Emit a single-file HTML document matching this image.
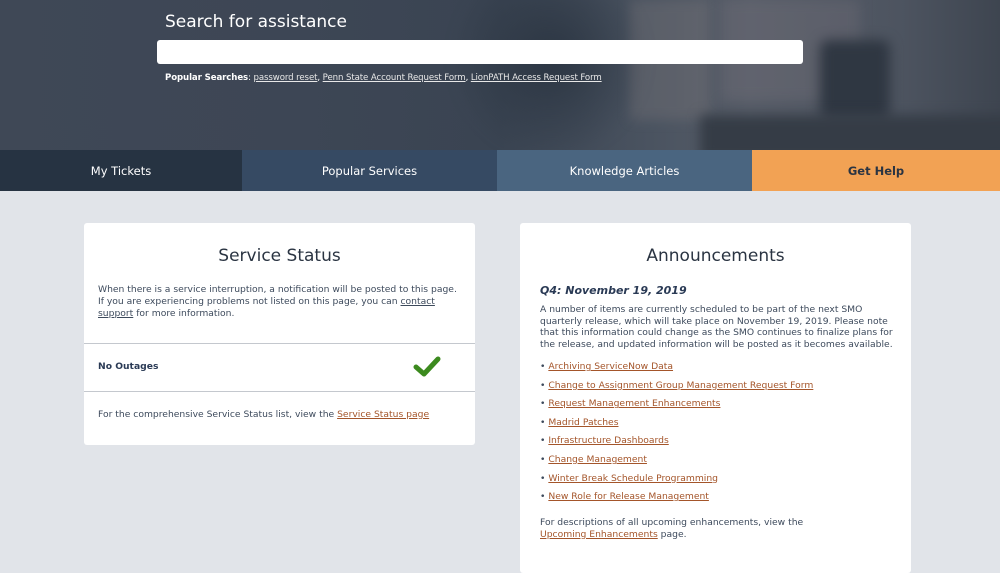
<!DOCTYPE html>
<html><head><meta charset="utf-8"><style>
*{margin:0;padding:0;box-sizing:border-box}
body{width:1000px;height:563px;overflow:hidden;background:#e1e4e9;font-family:"DejaVu Sans",sans-serif;color:#3d4a5c;position:relative}
.hero{position:absolute;left:0;top:0;width:1000px;height:150px;overflow:hidden;
background:linear-gradient(90deg,#3f4856 0%,#3d4655 30%,#3a4452 50%,#4a5360 65%,#575d68 75%,#4d5460 90%,#3e4550 100%)}
.hero .b{position:absolute;filter:blur(6px)}
h1{position:absolute;left:165px;top:12px;font-size:17px;font-weight:normal;color:#fff}
.search{position:absolute;left:157px;top:40px;width:646px;height:24px;background:#fff;border-radius:3px}
.pop{position:absolute;left:165px;top:73px;font-size:8.6px;color:#fff;letter-spacing:-0.1px}
.pop u{color:#e8e8e8}
.nav{position:absolute;top:150px;left:0;width:1000px;height:41px;display:flex;font-size:11.5px;color:#fff}
.nav div{display:flex;align-items:center;justify-content:center}
.card{position:absolute;background:#fff;border-radius:3px}
.t{font-size:17px;text-align:center;color:#2a3442}
.p{font-size:9.2px;line-height:12px}
a{color:#a4552a;text-decoration:underline}
.ann li{list-style:none;font-size:9.2px;height:18.6px}
</style></head><body>
<div class="hero">
<div class="b" style="left:450px;top:-10px;width:200px;height:170px;background:radial-gradient(ellipse at 50% 40%,#2c3643 0%,rgba(44,54,67,0) 70%)"></div>
<div class="b" style="left:630px;top:0;width:80px;height:120px;background:rgba(140,130,130,.25)"></div>
<div class="b" style="left:720px;top:0;width:140px;height:100px;background:rgba(130,125,130,.22)"></div>
<div class="b" style="left:820px;top:40px;width:70px;height:80px;background:#2f3742;border-radius:8px"></div>
<div class="b" style="left:700px;top:115px;width:320px;height:45px;background:#353c46"></div>
</div>
<h1>Search for assistance</h1>
<div class="search"></div>
<div class="pop"><b>Popular Searches</b>: <u>password reset</u>, <u>Penn State Account Request Form</u>, <u>LionPATH Access Request Form</u></div>
<div class="nav">
<div style="width:242px;background:#263342">My Tickets</div>
<div style="width:255px;background:#364a63">Popular Services</div>
<div style="width:255px;background:#4a6580">Knowledge Articles</div>
<div style="width:248px;background:#f2a254;color:#2a3442;font-weight:bold">Get Help</div>
</div>
<div class="card" style="left:84px;top:223px;width:391px;height:222px">
<div class="t" style="margin-top:23px">Service Status</div>
<div class="p" style="position:absolute;left:14px;top:61px;width:362px">When there is a service interruption, a notification will be posted to this page. If you are experiencing problems not listed on this page, you can <u>contact support</u> for more information.</div>
<div style="position:absolute;left:0;top:120px;width:391px;height:1px;background:#c4c8ce"></div>
<div style="position:absolute;left:14px;top:138px;font-size:9.2px;font-weight:bold;color:#2a3a55">No Outages</div>
<svg style="position:absolute;left:329px;top:133px" width="28" height="22" viewBox="0 0 28 22"><path d="M3 11 L11 18 L25 3" stroke="#3c8a1e" stroke-width="5" fill="none" stroke-linecap="round" stroke-linejoin="round"/></svg>
<div style="position:absolute;left:0;top:168px;width:391px;height:1px;background:#c4c8ce"></div>
<div class="p" style="position:absolute;left:14px;top:186px">For the comprehensive Service Status list, view the <a>Service Status page</a></div>
</div>
<div class="card" style="left:520px;top:223px;width:391px;height:350px">
<div class="t" style="margin-top:23px">Announcements</div>
<div style="position:absolute;left:20px;top:61px;font-size:11px;font-style:italic;font-weight:bold;color:#2a3a55">Q4: November 19, 2019</div>
<div class="p" style="position:absolute;left:20px;top:81px;width:355px;line-height:11.7px">A number of items are currently scheduled to be part of the next SMO quarterly release, which will take place on November 19, 2019. Please note that this information could change as the SMO continues to finalize plans for the release, and updated information will be posted as it becomes available.</div>
<ul class="ann" style="position:absolute;left:20px;top:138px">
<li>• <a>Archiving ServiceNow Data</a></li>
<li>• <a>Change to Assignment Group Management Request Form</a></li>
<li>• <a>Request Management Enhancements</a></li>
<li>• <a>Madrid Patches</a></li>
<li>• <a>Infrastructure Dashboards</a></li>
<li>• <a>Change Management</a></li>
<li>• <a>Winter Break Schedule Programming</a></li>
<li>• <a>New Role for Release Management</a></li>
</ul>
<div class="p" style="position:absolute;left:20px;top:294px;width:290px">For descriptions of all upcoming enhancements, view the <a>Upcoming Enhancements</a> page.</div>
</div>
</body></html>
